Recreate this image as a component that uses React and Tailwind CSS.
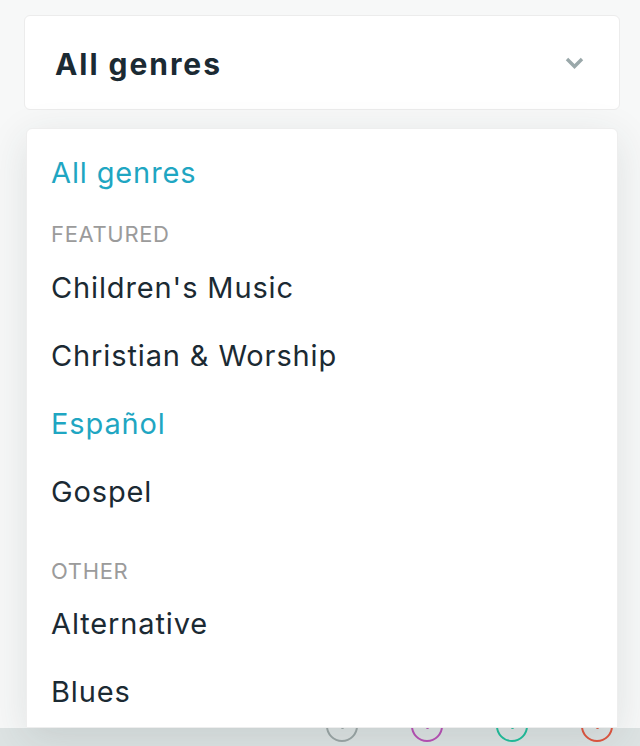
import React from "react";

const featured = ["Children's Music", "Christian & Worship", "Español", "Gospel"];
const other = ["Alternative", "Blues"];
const active = ["Español"];

const rings = ["#9ba6a6", "#b950b6", "#20bf9c", "#e0553f"];

function Item({ label }) {
  const on = active.includes(label);
  return (
    <div
      className={
        "h-[68px] leading-[68px] text-[29px] tracking-[0.03em] px-[24px] " +
        (on ? "text-[#1fa6c2]" : "text-[#1b2a33]")
      }
    >
      {label}
    </div>
  );
}

export default function App() {
  return (
    <div
      className="relative w-full h-[746px] overflow-hidden bg-[#f7f8f8] flex flex-col"
      style={{ fontFamily: '"Inter", "Liberation Sans", sans-serif' }}
    >
      {/* select */}
      <div className="ml-[24px] mt-[15px] w-[596px] h-[95px] shrink-0 rounded-md border border-[#ececec] bg-white flex items-center justify-between pl-[30px] pr-[35px]">
        <span className="pt-[4px] text-[30px] font-bold tracking-[0.065em] text-[#1b2a33]">All genres</span>
        <svg width="19" height="12" viewBox="0 0 19 12">
          <polyline points="2,2 9.5,9.5 17,2" fill="none" stroke="#9aa8aa" strokeWidth="3.4" />
        </svg>
      </div>

      <div className="flex-1" />

      {/* page content peeking under the menu */}
      <div className="h-[18px] shrink-0 bg-[#dde3e3] flex items-end pl-[326px] gap-[53px] pb-[4px]">
        {rings.map((c) => (
          <div
            key={c}
            className="w-[32px] h-[32px] shrink-0 rounded-full border-2 flex justify-center pt-[14px]"
            style={{ borderColor: c }}
          >
            <div className="w-[3px] h-[3px] rounded-full" style={{ backgroundColor: c }} />
          </div>
        ))}
      </div>

      {/* open dropdown menu */}
      <div className="absolute left-[26px] top-[128px] w-[592px] h-[600px] bg-white rounded-t-md border border-[#eeeeee] shadow-[0_10px_40px_rgba(40,60,60,0.12)] pt-[10px]">
        <div className="h-[68px] leading-[68px] text-[29px] tracking-[0.03em] px-[24px] text-[#1fa6c2]">All genres</div>
        <div className="h-[47px] pt-[16px] leading-[22px] text-[22px] tracking-[0.03em] px-[24px] text-[#9b9b9b]">FEATURED</div>
        {featured.map((g) => (
          <Item key={g} label={g} />
        ))}
        <div className="h-[64px] pt-[34px] leading-[22px] text-[22px] tracking-[0.03em] px-[24px] text-[#9b9b9b]">OTHER</div>
        {other.map((g) => (
          <Item key={g} label={g} />
        ))}
      </div>
    </div>
  );
}
